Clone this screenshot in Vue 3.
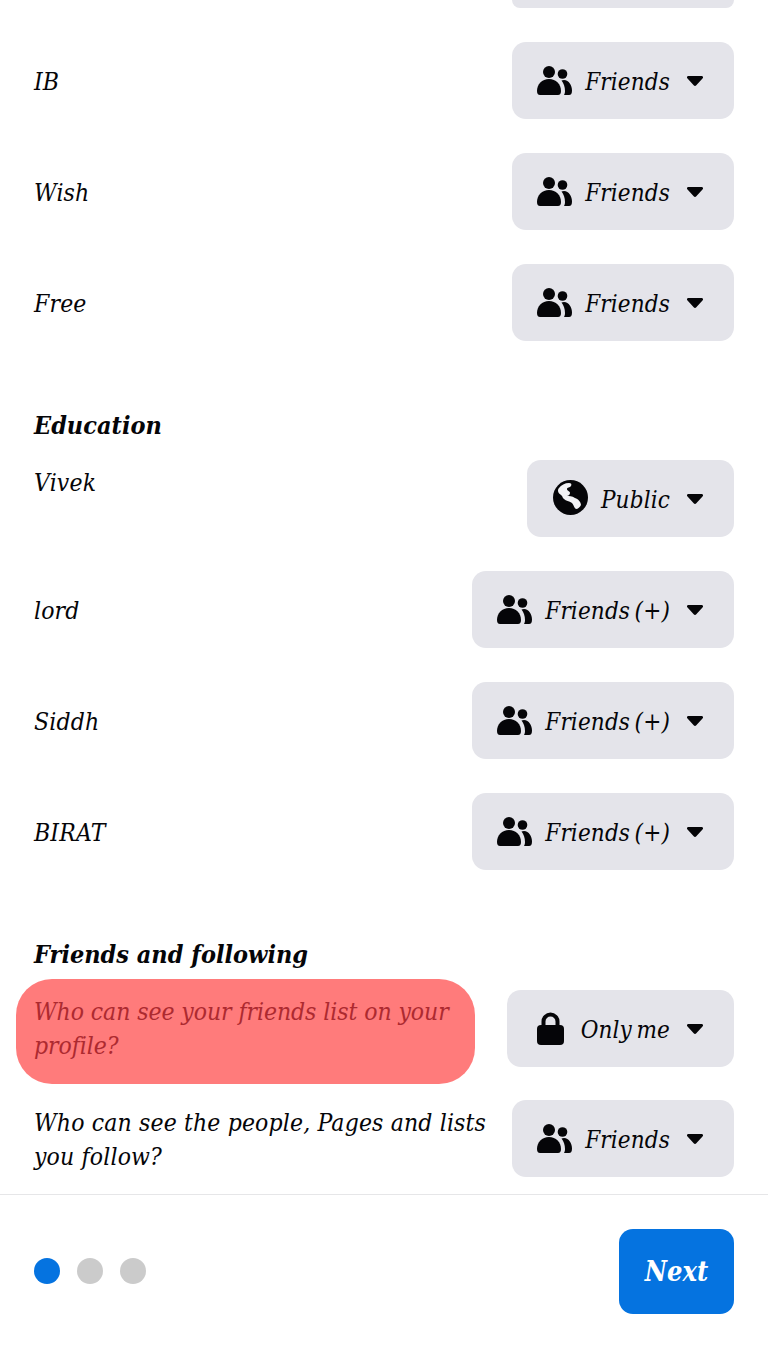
<template>
  <div class="screen">
    <div class="scroll-area">
      <!-- bottom of the row scrolled off the top -->
      <div class="cut-btn"></div>
      <template v-for="section in sections" :key="section.title">
        <h2 v-if="section.title" class="section-title">{{ section.title }}</h2>
        <div
          v-for="row in section.rows"
          :key="row.label"
          class="row"
          :class="{ 'row-top': row.top, 'row-highlight': row.highlight }"
        >
          <div class="row-label">{{ row.label }}</div>
          <button class="audience-btn">
            <svg v-if="row.audience.startsWith('Friends')" class="icon-friends" viewBox="0 0 35 29">
              <circle cx="12" cy="6" r="6" />
              <circle cx="25.500" cy="8" r="4.800" />
              <path d="M0 25c0-7 5-12 12-12s12 5 12 12c0 2.500-1 4-3 4H3c-2 0-3-1.500-3-4z" />
              <path d="M24.500 14.500c.8-.3 1.700-.5 2.500-.5 5 0 8 5.500 8 10.500 0 3-1 4.500-3 4.500h-5c.8-1.200 1-2.500 1-4 0-4-1.300-8-3.500-10.500z" />
            </svg>
            <svg v-else-if="row.audience === 'Public'" class="icon-globe" viewBox="0 0 35 35">
              <circle cx="17.500" cy="17.500" r="17.500" />
              <path fill="#f2f2f5" d="M6 8c2-3 6-5 10-5 2 0 3 1 2 3-1 2-4 1-4 3s3 2 3 4-2 3-3 3c2 0 5 0 8 2 3 1 6 4 6 7-1 2-3 4-5 4-2-1-2-4-4-6-3-2-6-2-8-4-2-1-1-3-3-4-1-1-3-2-3-4 0-1 0-2 1-3z" />
            </svg>
            <svg v-else class="icon-lock" viewBox="0 0 27 33">
              <path d="M4.500 15V9.500a9 9 0 0 1 18 0V15h-4V9.500a5 5 0 0 0-10 0V15z" />
              <rect x="0" y="13" width="27" height="20" rx="4" />
            </svg>
            <span class="audience-text">{{ row.audience }}</span>
            <svg class="caret" viewBox="0 0 16 10">
              <path d="M1.500 0h13c1.300 0 2 1.300 1.200 2.300L9.300 9.300c-.7.9-1.900.9-2.600 0L.3 2.300C-.5 1.300.2 0 1.500 0z" />
            </svg>
          </button>
        </div>
      </template>
    </div>
    <div class="footer">
      <div class="dots">
        <span v-for="n in 3" :key="n" class="dot" :class="{ active: n === 1 }"></span>
      </div>
      <button class="next-btn">Next</button>
    </div>
  </div>
</template>

<script setup>
const sections = [
  {
    title: '',
    rows: [
      { label: 'IB', audience: 'Friends' },
      { label: 'Wish', audience: 'Friends' },
      { label: 'Free', audience: 'Friends' },
    ],
  },
  {
    title: 'Education',
    rows: [
      { label: 'Vivek', audience: 'Public', top: true },
      { label: 'lord', audience: 'Friends (+)' },
      { label: 'Siddh', audience: 'Friends (+)' },
      { label: 'BIRAT', audience: 'Friends (+)' },
    ],
  },
  {
    title: 'Friends and following',
    rows: [
      { label: 'Who can see your friends list on your profile?', audience: 'Only me', highlight: true },
      { label: 'Who can see the people, Pages and lists you follow?', audience: 'Friends' },
    ],
  },
]
</script>

<style scoped>
.screen {
  width: 768px;
  height: 1365px;
  display: flex;
  flex-direction: column;
  overflow: hidden;
  background: #fff;
  color: #050508;
  font-family: "DejaVu Serif Condensed", "DejaVu Serif", "Liberation Serif", serif;
  font-style: italic;
}

.scroll-area {
  height: 1194px;
  padding: 0 34px;
  overflow: hidden;
  border-bottom: 1px solid #e6e6e8;
}

.cut-btn {
  width: 222px;
  height: 8px;
  margin: 0 0 34px auto;
  border-radius: 0 0 14px 14px;
  background: #e4e4ea;
}

.section-title {
  margin: 68px 0 17px;
  font-size: 25px;
  line-height: 34px;
  font-weight: 700;
}

.row {
  display: flex;
  justify-content: space-between;
  align-items: center;
  min-height: 77px;
  margin-bottom: 34px;
}

.row:last-child {
  margin-bottom: 0;
}

.row-top {
  align-items: flex-start;
}

.row-top .row-label {
  padding-top: 6px;
}

.row-label {
  font-size: 24.5px;
  line-height: 34px;
  letter-spacing: 0.15px;
  max-width: 456px;
  padding-top: 2px;
}

.row-highlight {
  margin-top: 18px;
  margin-bottom: 33px;
}

.row-highlight .row-label {
  width: 459px;
  max-width: none;
  height: 105px;
  box-sizing: border-box;
  margin: -11px 0 -17px -18px;
  padding: 16px 10px 0 18px;
  border-radius: 36px;
  background: #ff7b7b;
  color: #ad2a30;
  letter-spacing: -0.07px;
}

.audience-btn {
  display: flex;
  align-items: center;
  flex-shrink: 0;
  height: 77px;
  padding: 0 31px 0 25px;
  border: none;
  border-radius: 14px;
  background: #e4e4ea;
  color: inherit;
  font: inherit;
}

.audience-btn svg {
  fill: #050508;
  display: block;
}

.icon-friends {
  width: 35px;
  height: 29px;
  margin-right: 13px;
}

.icon-globe {
  width: 35px;
  height: 35px;
  margin: -2px 13px 0 1px;
}

.icon-lock {
  width: 27px;
  height: 33px;
  margin: 0 17px 0 5px;
}

.audience-text {
  font-size: 24px;
  line-height: 34px;
  letter-spacing: 0.15px;
  word-spacing: -2.5px;
  white-space: nowrap;
  padding-top: 2px;
}

.caret {
  width: 16px;
  height: 10px;
  margin-left: 17px;
  margin-top: 1px;
}

.footer {
  flex: 1;
  display: flex;
  justify-content: space-between;
  align-items: flex-start;
  padding: 34px 34px 0;
}

.dots {
  display: flex;
  gap: 17px;
  margin-top: 29px;
}

.dot {
  width: 26px;
  height: 26px;
  border-radius: 50%;
  background: #cbcbcb;
}

.dot.active {
  background: #0573e0;
}

.next-btn {
  width: 115px;
  height: 85px;
  border: none;
  border-radius: 14px;
  background: #0573e0;
  color: #fff;
  font: inherit;
  font-size: 27px;
  font-weight: 700;
}
</style>
